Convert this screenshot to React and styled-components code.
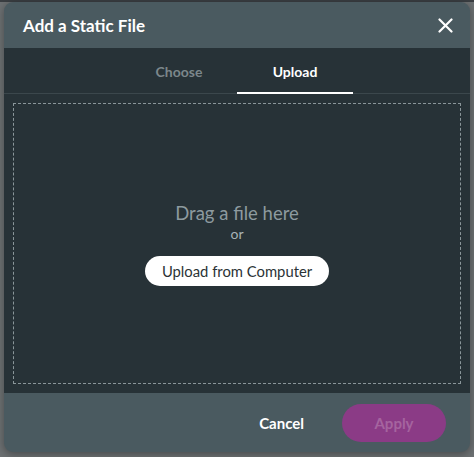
import styled, { createGlobalStyle } from 'styled-components';

// GLOBAL
const GlobalStyle = createGlobalStyle`
  html, body {
    margin: 0;
    padding: 0;
    background: #6c7072;
    font-family: Lato, "Open Sans", sans-serif;
  }
`;

// STYLES
const Backdrop = styled.div`
  width: 474px;
  height: 457px;
  box-sizing: border-box;
  padding: 2px 4px 5px;
  background: linear-gradient(#3a3e42 0 2px, #6c7072 2px);
`;

const Modal = styled.div`
  height: 100%;
  display: flex;
  flex-direction: column;
  border-radius: 9px;
  overflow: hidden;
  background: #4a5a60;
  box-shadow: 0 2px 8px rgba(0, 0, 0, 0.35);
`;

const Header = styled.header`
  height: 46px;
  flex: none;
  display: flex;
  align-items: center;
  justify-content: space-between;
  padding: 0 14px 0 19px;
`;

const Title = styled.h2`
  margin: 0;
  font-size: 17px;
  font-weight: 700;
  color: #ffffff;
`;

const CloseButton = styled.button`
  width: 22px;
  height: 22px;
  padding: 0;
  border: none;
  background: transparent;
  display: flex;
  align-items: center;
  justify-content: center;
  cursor: pointer;
`;

const Body = styled.div`
  flex: 1;
  display: flex;
  flex-direction: column;
  background: #273237;
`;

const Tabs = styled.nav`
  height: 45px;
  flex: none;
  display: flex;
  justify-content: center;
  border-bottom: 1px solid #3b474c;
`;

const Tab = styled.button`
  width: 116px;
  padding: 2px 0 0;
  border: none;
  border-bottom: 2px solid ${(p) => (p.$active ? '#ffffff' : 'transparent')};
  margin-bottom: -1px;
  background: transparent;
  font-family: inherit;
  font-size: 14px;
  font-weight: 700;
  color: ${(p) => (p.$active ? '#ffffff' : '#7c878b')};
  cursor: pointer;
`;

const DropArea = styled.div`
  flex: 1;
  padding: 9px;
  display: flex;
`;

const DropZone = styled.div`
  flex: 1;
  border: 1px dashed #8a969a;
  display: flex;
  flex-direction: column;
  align-items: center;
  justify-content: center;
`;

const DragText = styled.p`
  margin: 0;
  font-size: 18.5px;
  color: #8d9a9f;
  line-height: 22px;
`;

const OrText = styled.p`
  margin: 0 0 12px;
  font-size: 14px;
  color: #a8b2b6;
  line-height: 20px;
`;

const UploadButton = styled.button`
  height: 30px;
  padding: 0 17px;
  border: none;
  border-radius: 15px;
  background: #ffffff;
  font-family: inherit;
  font-size: 14.8px;
  color: #2b3336;
  cursor: pointer;
`;

const Footer = styled.footer`
  height: 59px;
  flex: none;
  display: flex;
  align-items: center;
  justify-content: flex-end;
  gap: 38px;
  padding: 0 24px 0 0;
`;

const TextButton = styled.button`
  padding: 0;
  border: none;
  background: transparent;
  font-family: inherit;
  font-size: 15px;
  font-weight: 700;
  color: #ffffff;
  cursor: pointer;
`;

const PrimaryButton = styled.button`
  width: 104px;
  height: 38px;
  border: none;
  border-radius: 19px;
  background: #8b3b86;
  font-family: inherit;
  font-size: 15px;
  font-weight: 700;
  color: #a5649f;
  cursor: default;
`;

// APP
function App() {
  return (
    <>
      <GlobalStyle />
      <Backdrop>
        <Modal>
          <Header>
            <Title>Add a Static File</Title>
            <CloseButton type='button' aria-label='Close'>
              <svg width='15' height='15' viewBox='0 0 15 15'>
                <path d='M1.5 1.5L13.5 13.5M13.5 1.5L1.5 13.5' stroke='#fff' strokeWidth='2.2' strokeLinecap='round' />
              </svg>
            </CloseButton>
          </Header>
          <Body>
            <Tabs>
              <Tab type='button'>Choose</Tab>
              <Tab type='button' $active>Upload</Tab>
            </Tabs>
            <DropArea>
              <DropZone>
                <DragText>Drag a file here</DragText>
                <OrText>or</OrText>
                <UploadButton type='button'>Upload from Computer</UploadButton>
              </DropZone>
            </DropArea>
          </Body>
          <Footer>
            <TextButton type='button'>Cancel</TextButton>
            <PrimaryButton type='button' disabled>Apply</PrimaryButton>
          </Footer>
        </Modal>
      </Backdrop>
    </>
  );
}

export default App;
